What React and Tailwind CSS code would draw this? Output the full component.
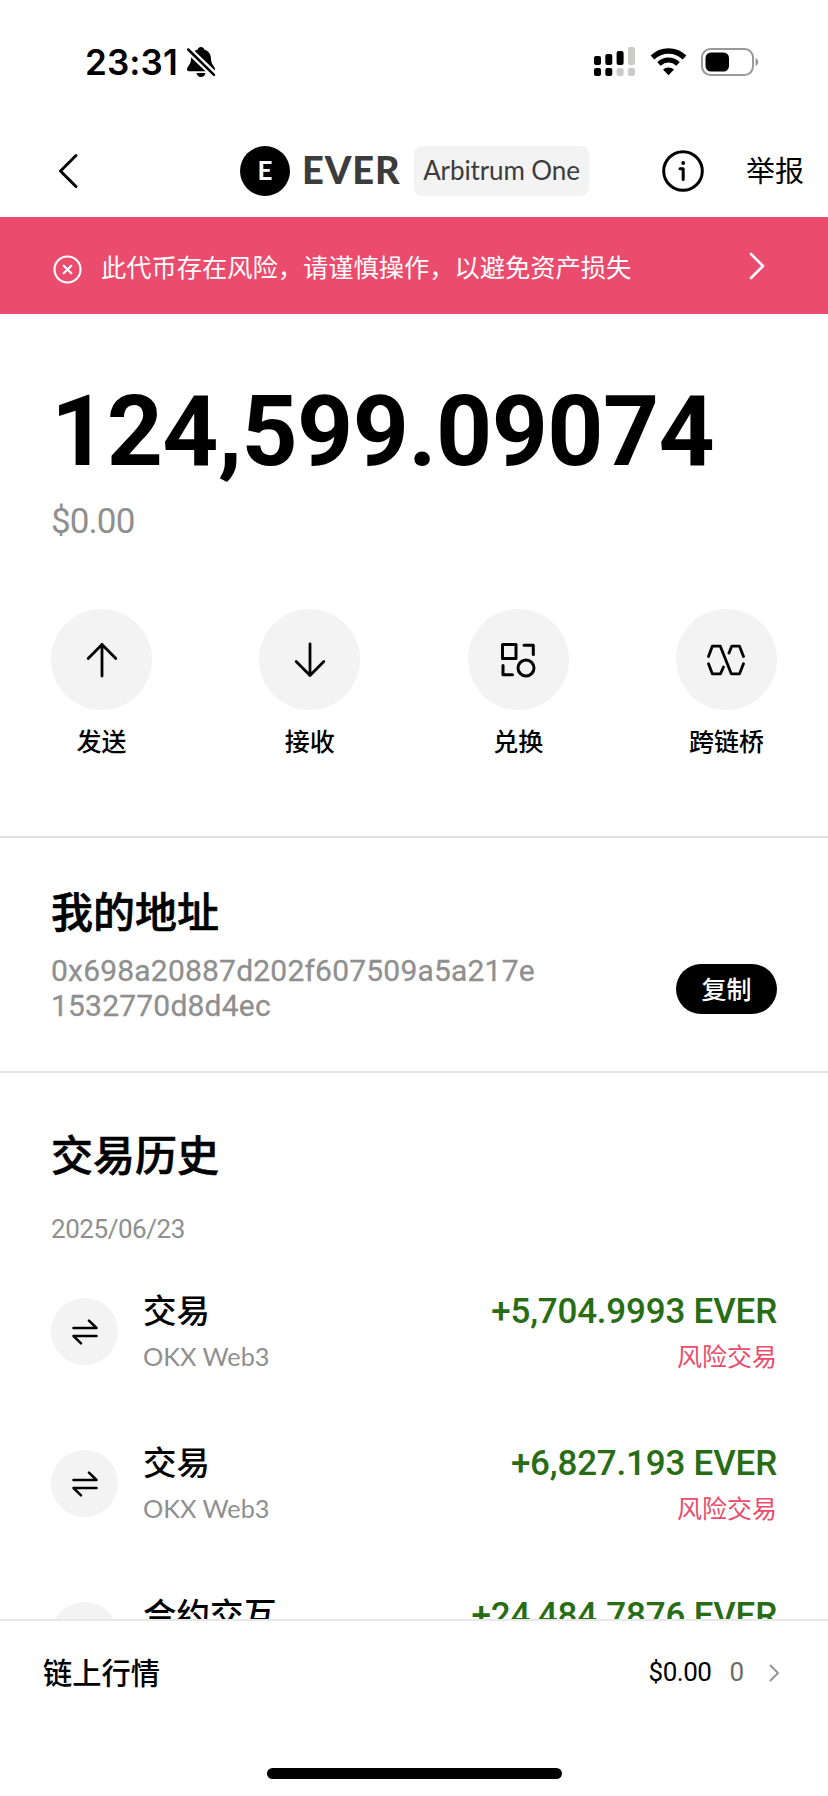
import React from 'react';
import clsx from 'clsx';

const actions = [
    { label: '发送', icon: SendIcon },
    { label: '接收', icon: ReceiveIcon },
    { label: '兑换', icon: SwapIcon },
    { label: '跨链桥', icon: BridgeIcon },
];

const transactions = [
    { title: '交易', source: 'OKX Web3', amount: '+5,704.9993 EVER', tag: '风险交易' },
    { title: '交易', source: 'OKX Web3', amount: '+6,827.193 EVER', tag: '风险交易' },
    { title: '合约交互', source: 'OKX Web3', amount: '+24,484.7876 EVER', tag: '风险交易' },
];

function Stroke({ className, viewBox, width = 3, children }) {
    return (
        <svg
            className={clsx('shrink-0', className)}
            viewBox={viewBox}
            fill="none"
            stroke="currentColor"
            strokeWidth={width}
            strokeLinecap="round"
            strokeLinejoin="round"
        >
            {children}
        </svg>
    );
}

function SendIcon() {
    return (
        <Stroke className="w-[34px] h-[36px]" viewBox="0 0 34 36" width={2.8}>
            <path d="M17 34V2.5M3.2 16.5 17 2.5l13.8 14" />
        </Stroke>
    );
}

function ReceiveIcon() {
    return (
        <Stroke className="w-[34px] h-[36px]" viewBox="0 0 34 36" width={2.8}>
            <path d="M17 2v31.5M3.2 19.5l13.8 14 13.8-14" />
        </Stroke>
    );
}

function SwapIcon() {
    return (
        <Stroke className="w-[36px] h-[36px]" viewBox="0 0 36 36" width={3}>
            <path d="M2.5 2.5h13.5v14H2.5zM24 3.2h9.3v9.3M3 23.5v9.3h9.5" />
            <circle cx="26" cy="26" r="8" />
        </Stroke>
    );
}

function BridgeIcon() {
    return (
        <Stroke className="w-[38px] h-[32px]" viewBox="0 0 38 32" width={2.8}>
            <path d="M1.5 12.5 5.3 2.2h8l11 27.6h8.2l4-10M22 9l2.7-6.8h7.8l4 10.3M1.5 19.8l3.8 10h8.2l3-6.8" />
        </Stroke>
    );
}

function StatusBar() {
    return (
        <div className="flex h-[124px] shrink-0 items-start pl-[85px] pr-[68px] pt-[47px]">
            <span className="w-[94px] font-['Inter',sans-serif] text-[35px] leading-[30px] font-semibold tracking-[0.1px] whitespace-nowrap">
                23:31
            </span>
            <svg className="ml-[7px] h-[30px] w-[30px] shrink-0" viewBox="0 0 30 30">
                <path d="M15 0c1.8 0 3 1.1 3.3 2.4 4.7 1.5 6.7 5 6.7 9.6 0 5.5 4 7.4 4 10.5 0 1.2-.8 1.7-2 1.7H3c-1.2 0-2-.5-2-1.7 0-3.1 4-5 4-10.5 0-4.6 2-8.1 6.7-9.6C12 1.1 13.2 0 15 0zM10.500 26h9c-.5 2.600-2.200 4-4.500 4s-4-1.400-4.500-4z" />
                <path d="M2 2.5 28.5 28" stroke="#fff" strokeWidth="7" />
                <path d="M2.2 2.5 28 27.8" stroke="#000" strokeWidth="2.5" strokeLinecap="round" />
            </svg>
            <div className="ml-auto flex h-[30px] items-center">
                <svg className="h-[30px] w-[42px]" viewBox="0 0 42 30">
                    <rect x="0" y="9" width="7" height="9" rx="2" />
                    <rect x="11.3" y="7" width="7" height="11" rx="2" />
                    <rect x="22.6" y="4" width="7" height="14" rx="2" />
                    <rect x="34" y="0" width="7" height="18" rx="2" fill="#c9cbc9" />
                    <rect x="0" y="21" width="7" height="8" rx="2" />
                    <rect x="11.3" y="21" width="7" height="8" rx="2" />
                    <rect x="22.6" y="21" width="7" height="8" rx="2" fill="#c9cbc9" />
                    <rect x="34" y="21" width="7" height="8" rx="2" fill="#c9cbc9" />
                </svg>
                <svg className="ml-[14px] h-[28px] w-[37px]" viewBox="0 0 37 28">
                    <path d="M2.5 9.500C11.5.8 25.5.8 34.5 9.500" fill="none" stroke="#000" strokeWidth="5.4" />
                    <path d="M9 16c5.5-5.2 13.5-5.2 19 0" fill="none" stroke="#000" strokeWidth="5" />
                    <path d="M18.5 27.3 13 21.600c3-2.800 8-2.800 11 0z" />
                </svg>
                <svg className="ml-[14px] h-[28px] w-[59px]" viewBox="0 0 59 28">
                    <rect x="1" y="1" width="51" height="26" rx="8.5" fill="none" stroke="#999" strokeWidth="2" />
                    <rect x="4.5" y="4.5" width="23.5" height="19" rx="5.5" />
                    <path d="M54.5 10c3.7 1.2 3.7 6.8 0 8z" fill="#999" />
                </svg>
            </div>
        </div>
    );
}

function Header() {
    return (
        <header className="flex h-[93px] shrink-0 items-center pl-[58px] pr-[24px] pt-px">
            <Stroke className="w-[20px] h-[36px]" viewBox="0 0 20 36" width={3}>
                <path d="M18 2.5 2.5 18 18 33.5" />
            </Stroke>
            <div className="ml-[162px] flex h-[50px] w-[50px] items-center justify-center rounded-full bg-black pb-[2px] font-['Lato',sans-serif] text-[26px] leading-none font-bold text-white">
                E
            </div>
            <span className="ml-[12px] w-[99px] pb-[4px] font-['Lato',sans-serif] text-[38px] leading-[50px] font-black tracking-[0.9px] text-[#3c3c3c]">
                EVER
            </span>
            <span className="ml-[13px] flex h-[50px] w-[175px] items-center justify-center rounded-lg bg-[#f3f3f3] pb-[2px] font-['Lato',sans-serif] text-[26px] tracking-[-0.1px] whitespace-nowrap text-[#3c3c3c]">
                Arbitrum One
            </span>
            <Stroke className="ml-[73px] w-[42px] h-[42px]" viewBox="0 0 42 42" width={3}>
                <circle cx="21" cy="21" r="19.3" />
                <path d="M18 18.8h3.2v10.7" />
                <circle cx="21.2" cy="13" r="1.9" fill="currentColor" stroke="none" />
            </Stroke>
            <span className="ml-auto pb-[5px] text-[29px] leading-[50px] whitespace-nowrap">举报</span>
        </header>
    );
}

function RiskBanner() {
    return (
        <div className="flex h-[97px] shrink-0 items-center bg-[#eb4b6c] pl-[53px] pr-[63px] text-white">
            <Stroke className="mt-[7px] w-[29px] h-[29px]" viewBox="0 0 29 29" width={2.2}>
                <circle cx="14.5" cy="14.5" r="13" />
                <path d="m10.7 10.7 7.6 7.6m0-7.6-7.6 7.6" />
            </Stroke>
            <p className="ml-[19px] text-[25.25px] leading-[36px] whitespace-nowrap">
                此代币存在风险，请谨慎操作，以避免资产损失
            </p>
            <Stroke className="ml-auto w-[16px] h-[28px]" viewBox="0 0 16 28" width={2.6}>
                <path d="m2 2 12 12L2 26" />
            </Stroke>
        </div>
    );
}

function TransactionRow({ title, source, amount, tag }) {
    return (
        <li className="flex h-[152px] items-start">
            <div className="mt-[8px] flex h-[67px] w-[67px] shrink-0 items-center justify-center rounded-full bg-[#f3f3f3]">
                <Stroke className="w-[26px] h-[26px]" viewBox="0 0 26 26" width={2.5}>
                    <path d="M1.5 9h23l-7.5-7.3M24.5 17h-23L9 24.3" />
                </Stroke>
            </div>
            <div className="ml-[25px]">
                <h3 className="text-[33.5px] leading-[38px] font-medium">{title}</h3>
                <p className="mt-[11px] font-['Lato',sans-serif] text-[25.3px] leading-[34px] text-[#8f8f8f]">{source}</p>
            </div>
            <div className="ml-auto text-right">
                <p className="font-['Roboto',sans-serif] text-[35px] leading-[43px] font-medium tracking-[-0.2px] text-[#286c14]">{amount}</p>
                <p className="mt-[4px] text-[25px] leading-[36px] text-[#eb4b6c]">{tag}</p>
            </div>
        </li>
    );
}

export default function App() {
    return (
        <div className="flex h-[1796px] w-[828px] flex-col overflow-hidden bg-white font-['Noto_Sans_CJK_SC',sans-serif] text-black">
            <StatusBar />
            <Header />
            <RiskBanner />

            <main className="min-h-0 flex-1 overflow-hidden">
                <section className="h-[524px] border-b-2 border-[#e2e2e2] px-[51px] pt-[63px]">
                    <h1 className="font-['Roboto',sans-serif] text-[98px] leading-[110px] font-bold tracking-[-0.6px] whitespace-nowrap">
                        124,599.09074
                    </h1>
                    <p className="mt-[13px] font-['Roboto',sans-serif] text-[35px] leading-[44px] tracking-[-0.9px] text-[#8f8f8f]">$0.00</p>
                    <div className="mt-[65px] flex justify-between">
                        {actions.map(({ label, icon: Icon }) => (
                            <div key={label} className="flex w-[101px] flex-col items-center">
                                <div className="flex h-[101px] w-[101px] items-center justify-center rounded-full bg-[#f3f3f3]">
                                    <Icon />
                                </div>
                                <span className="mt-[12px] text-[25px] leading-[36px] font-medium whitespace-nowrap">{label}</span>
                            </div>
                        ))}
                    </div>
                </section>

                <section className="flex h-[235px] justify-between border-b-2 border-[#e2e2e2] px-[51px] pt-[44px]">
                    <div>
                        <h2 className="text-[42px] leading-[56px] font-medium [-webkit-text-stroke:0.6px]">我的地址</h2>
                        <p className="mt-[16px] w-[500px] font-['Roboto',sans-serif] text-[30px] leading-[34.5px] tracking-[0.2px] text-[#8f8f8f] [-webkit-text-stroke:0.3px]">
                            0x698a20887d202f607509a5a217e
                            <br />
                            1532770d8d4ec
                        </p>
                    </div>
                    <button className="mt-[82px] h-[50px] w-[101px] shrink-0 rounded-full bg-black pb-[2px] text-[25px] leading-[46px] font-medium text-white">
                        复制
                    </button>
                </section>

                <section className="px-[51px] pt-[52px]">
                    <h2 className="text-[42px] leading-[56px] font-medium [-webkit-text-stroke:0.6px]">交易历史</h2>
                    <p className="mt-[31px] font-['Roboto',sans-serif] text-[26px] leading-[34px] tracking-[-0.45px] text-[#8f8f8f]">2025/06/23</p>
                    <ul className="mt-[44px]">
                        {transactions.map((tx) => (
                            <TransactionRow key={tx.amount} {...tx} />
                        ))}
                    </ul>
                </section>
            </main>

            <footer className="flex h-[177px] shrink-0 flex-col items-center border-t-2 border-[#e8e8e8] bg-white">
                <div className="flex w-full items-center pl-[43px] pr-[48px] pt-[26px]">
                    <span className="text-[29.25px] leading-[46px] font-medium">链上行情</span>
                    <span className="ml-auto pt-[2px] font-['Roboto',sans-serif] text-[26px] leading-[46px] tracking-[-0.5px]">$0.00</span>
                    <span className="ml-[18px] pt-[2px] font-['Roboto',sans-serif] text-[26px] leading-[46px] text-[#6b6b6b]">0</span>
                    <Stroke className="ml-[25px] mt-[3px] w-[11px] h-[18px]" viewBox="0 0 11 18" width={1.8}>
                        <path d="m1.5 1.5 7.5 7.5-7.5 7.5" stroke="#8f8f8f" />
                    </Stroke>
                </div>
                <div className="mt-[73px] h-[11px] w-[295px] rounded-full bg-black" />
            </footer>
        </div>
    );
}
